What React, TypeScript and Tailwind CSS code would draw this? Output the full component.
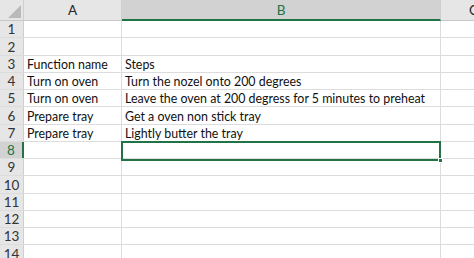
import React from "react";

const rows: [string, string][] = [
  ["", ""],
  ["", ""],
  ["Function name", "Steps"],
  ["Turn on oven", "Turn the nozel onto 200 degrees"],
  ["Turn on oven", "Leave the oven at 200 degress for 5 minutes to preheat"],
  ["Prepare tray", "Get a oven non stick tray"],
  ["Prepare tray", "Lightly butter the tray"],
  ["", ""],
  ["", ""],
  ["", ""],
  ["", ""],
  ["", ""],
  ["", ""],
  ["", ""],
];

export default function App() {
  return (
    <div
      className="w-[474px] h-[258px] overflow-hidden bg-white relative"
      style={{ fontFamily: "Lato, 'Open Sans', sans-serif" }}
    >
      {/* header */}
      <div className="flex h-[21px] bg-[#e6e6e6] border-b border-[#c8c8c8]">
        <div className="w-[24px] shrink-0 border-r border-[#cfcfcf] flex items-end justify-end pr-[2px] pb-[2px]">
          <svg width="13" height="13" viewBox="0 0 13 13">
            <polygon points="13,0 13,13 0,13" fill="#b9b9b9" />
          </svg>
        </div>
        <div className="w-[98px] shrink-0 border-r border-[#cfcfcf] flex items-center justify-center pt-[1px] text-[13.5px] text-[#262626]">
          A
        </div>
        <div className="w-[319px] shrink-0 bg-[#d2d2d2] border-r border-[#cfcfcf] border-b-2 border-b-[#217346] flex items-center justify-center pt-[1px] text-[13.5px] text-[#217346] -mb-[1px]">
          B
        </div>
        <div className="flex-1 flex items-center justify-center text-[13.5px] text-[#262626] pl-[28px]">C</div>
      </div>
      {rows.map(([a, b], i) => {
        const sel = i === 7;
        return (
          <div key={i} className="flex h-[17.25px] border-b border-[#dcdcdc] leading-none">
            <div
              className={
                sel
                  ? "w-[24px] shrink-0 bg-[#d2d2d2] border-r-2 border-[#217346] flex items-center justify-center pt-[2px] text-[13.5px] text-[#217346]"
                  : "w-[24px] shrink-0 bg-[#e6e6e6] border-r border-[#cfcfcf] flex items-center justify-center pt-[2px] text-[13.5px] text-[#333]"
              }
            >
              {i + 1}
            </div>
            <div className="w-[98px] shrink-0 border-r border-[#dcdcdc] flex items-center pl-[3px] pt-[3px] whitespace-nowrap text-[12.4px] text-[#111]">
              {a}
            </div>
            <div className="w-[319px] shrink-0 border-r border-[#dcdcdc] flex items-center pl-[3px] pt-[3px] whitespace-nowrap text-[12.4px] text-[#111]">
              {b}
            </div>
            <div className="flex-1" />
          </div>
        );
      })}
      {/* selection */}
      <div className="absolute left-[121px] top-[141px] w-[320px] h-[20px] border-2 border-[#217346]">
        <div className="absolute right-[-4px] bottom-[-4px] w-[5px] h-[5px] bg-[#217346] border border-white" />
      </div>
    </div>
  );
}
